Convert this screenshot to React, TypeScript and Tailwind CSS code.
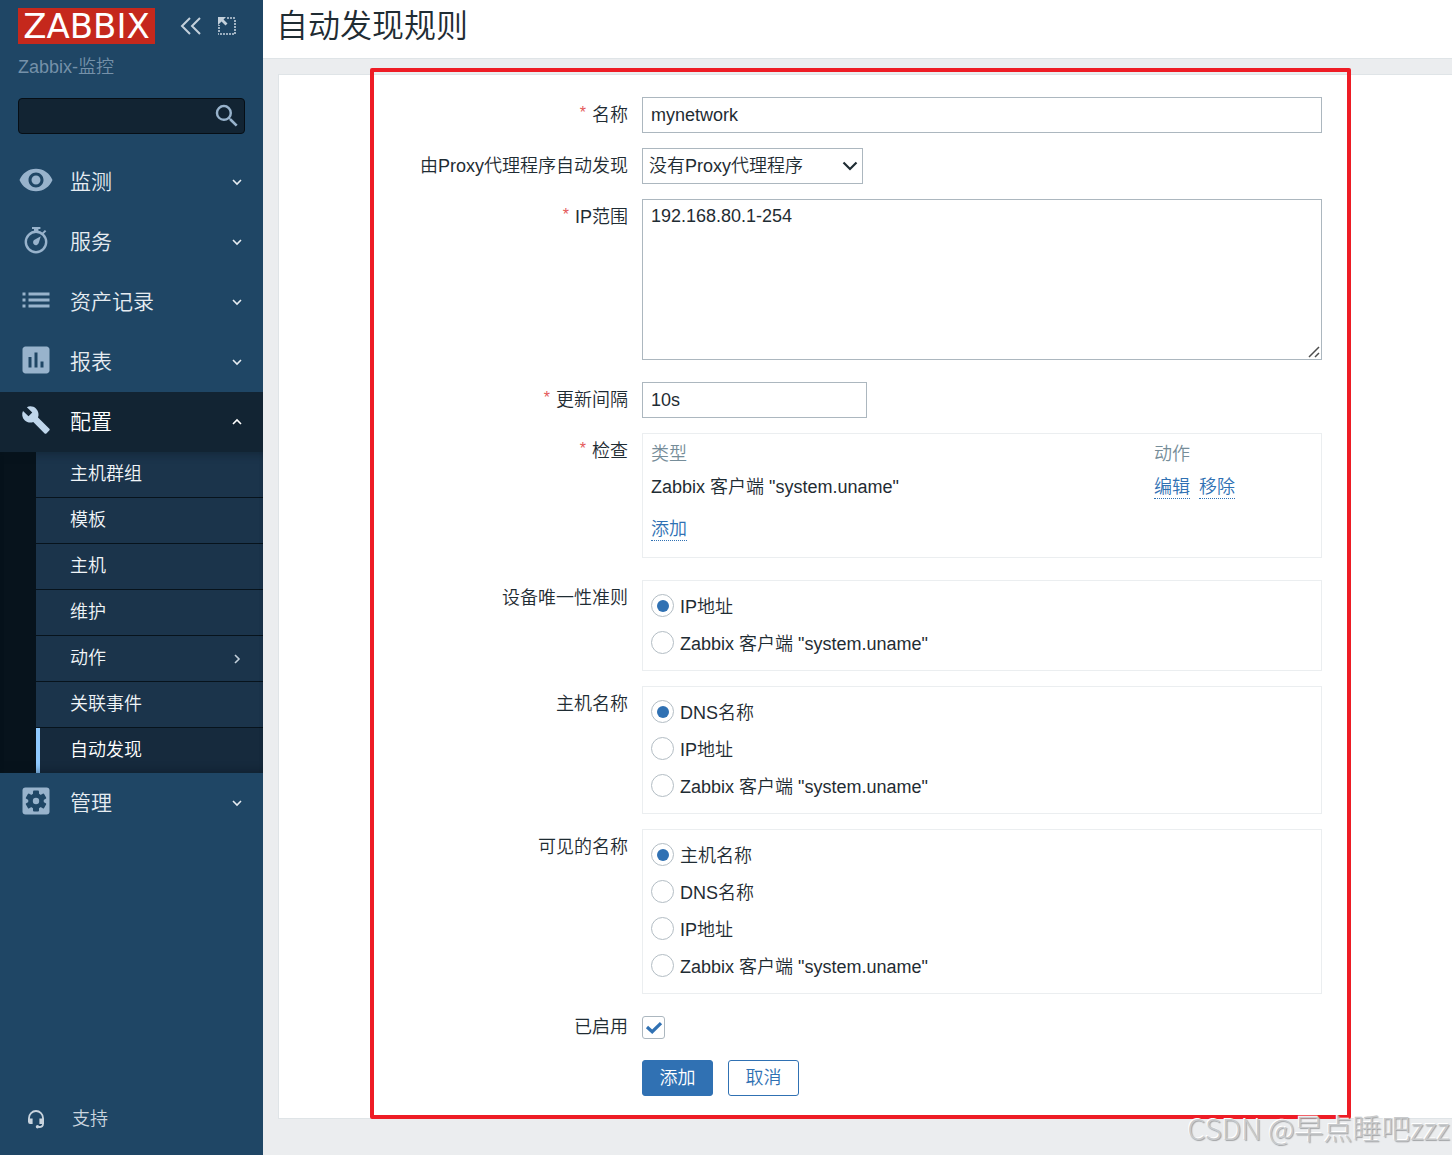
import { useState, type ReactNode } from "react";
import { MdAssessment, MdList, MdSearch, MdVisibility } from "react-icons/md";

const AGENT_KEY = 'Zabbix 客户端 "system.uname"';

const configItems = ["主机群组", "模板", "主机", "维护", "动作", "关联事件", "自动发现"];

function StopwatchIcon() {
  return (
    <svg width="36" height="36" viewBox="0 0 36 36" fill="none">
      <circle cx="18" cy="20" r="10.2" stroke="currentColor" strokeWidth="2.4" />
      <path d="M14 5h8.400v2h-2v2.800h-4.400V7h-2z" fill="currentColor" />
      <path d="M24.600 11.600l3-3" stroke="currentColor" strokeWidth="2" />
      <path d="M22.800 14.200l-2 6.600a2.900 2.900 0 1 1-3.800-3.300z" fill="currentColor" />
    </svg>
  );
}

function WrenchIcon() {
  return (
    <svg width="30" height="30" viewBox="0 0 24 24" fill="currentColor">
      <path d="M22.700 19l-9.100-9.100c.9-2.300.4-5-1.500-6.900-2-2-5-2.400-7.400-1.300L9 6 6 9 1.600 4.700C.4 7.100.9 10.100 2.900 12.100c1.900 1.900 4.600 2.400 6.900 1.500l9.100 9.100c.4.4 1 .4 1.400 0l2.300-2.300c.5-.4.5-1.100.1-1.400z" />
    </svg>
  );
}

function GearIcon() {
  return (
    <svg width="36" height="36" viewBox="0 0 36 36">
      <rect x="4.500" y="4.500" width="27" height="27" rx="3" fill="currentColor" />
      <g fill="#1f4665">
        <circle cx="18" cy="18" r="7.800" />
        <rect x="15" y="7.500" width="6" height="21" rx="1" />
        <rect x="15" y="7.500" width="6" height="21" rx="1" transform="rotate(60 18 18)" />
        <rect x="15" y="7.500" width="6" height="21" rx="1" transform="rotate(120 18 18)" />
      </g>
      <circle cx="18" cy="18" r="3.200" fill="currentColor" />
    </svg>
  );
}

function HeadsetIcon() {
  return (
    <svg width="18" height="20" viewBox="0 0 18 20" fill="none">
      <path d="M2 13V9a7 7 0 0 1 14 0v6c0 2-1.500 3-4 3" stroke="currentColor" strokeWidth="1.8" />
      <path d="M1.100 9.500H5.600V15H3.100a2 2 0 0 1-2-2zM12.400 9.500h4.500V15h-4.500z" fill="currentColor" />
      <circle cx="10.500" cy="17.700" r="1.700" fill="currentColor" />
    </svg>
  );
}

function Chevron({ className = "" }: { className?: string }) {
  return (
    <svg width="10" height="10" viewBox="0 0 10 10" fill="none" className={className}>
      <path d="M1 3l4 4 4-4" stroke="currentColor" strokeWidth="1.6" />
    </svg>
  );
}

function MenuItem({ icon, label, open = false }: { icon: ReactNode; label: string; open?: boolean }) {
  return (
    <a
      href="#"
      className={
        open
          ? "flex h-[60px] items-center bg-[#122433] pr-[21px] pl-[18px] text-white"
          : "flex h-[60px] items-center pr-[21px] pl-[18px] text-[#e6ecf1]"
      }
    >
      <span
        className={
          open
            ? "flex w-9 justify-center pb-1 text-[#bfd6eb]"
            : "flex w-9 justify-center pb-1 text-[#98b3cc]"
        }
      >
        {icon}
      </span>
      <span className="ml-4 flex-1 text-[21px]">{label}</span>
      <Chevron className={open ? "rotate-180" : ""} />
    </a>
  );
}

function Sidebar() {
  return (
    <aside className="flex w-[263px] shrink-0 flex-col bg-[#1f4665]">
      <div className="flex items-center pt-2 pl-[18px]">
        <a
          href="#"
          className="flex h-9 w-[137px] items-center justify-center bg-[#c5281c] font-['DejaVu_Sans',sans-serif] text-[34px] font-normal text-white"
        >
          ZABBIX
        </a>
        <button type="button" aria-label="收起" className="ml-6 text-[#c3d0db]">
          <svg width="24" height="20" viewBox="0 0 24 20" fill="none">
            <path d="M11 2L3 10l8 8M21 2l-8 8 8 8" stroke="currentColor" strokeWidth="2" />
          </svg>
        </button>
        <button type="button" aria-label="隐藏" className="ml-3.5 text-[#c3d0db]">
          <svg width="20" height="20" viewBox="0 0 20 20" fill="none">
            <path
              d="M10 2h9M18 4v15M17 18H1M2 16V9"
              stroke="currentColor"
              strokeWidth="1.600"
              strokeDasharray="2 1"
            />
            <path d="M1 1h8L6.500 3.500l4 4-2 2-4-4L1 9z" fill="currentColor" />
          </svg>
        </button>
      </div>
      <div className="mt-2 pl-[18px] text-[18px] leading-[30px] text-[#7591a9]">Zabbix-监控</div>

      <form className="relative mx-[18px] mt-4" onSubmit={(e) => e.preventDefault()}>
        <input
          type="text"
          aria-label="搜索"
          className="block h-9 w-full rounded border border-[#060e15] bg-[#122433] pr-10 pl-2 text-[18px] text-white outline-none"
        />
        <button type="submit" aria-label="搜索" className="absolute top-[3px] right-[3px] text-[#98b3cc]">
          <MdSearch size={30} />
        </button>
      </form>

      <nav className="mt-[18px]">
        <MenuItem icon={<MdVisibility size={36} />} label="监测" />
        <MenuItem icon={<StopwatchIcon />} label="服务" />
        <MenuItem icon={<MdList size={36} />} label="资产记录" />
        <MenuItem icon={<MdAssessment size={36} />} label="报表" />
        <MenuItem icon={<WrenchIcon />} label="配置" open />
        <div className="relative">
          <div className="divide-y divide-[#07131c] bg-[#07131c] pl-9">
            {configItems.map((item) => (
              <a
                key={item}
                href="#"
                className={
                  item === "自动发现"
                    ? "flex h-[45px] items-center border-l-4 border-l-[#8fcaff] bg-[#162a3d] pr-[21px] pl-[30px] text-[18px] text-white"
                    : "flex h-[46px] items-center bg-[#1b344b] pr-[21px] pl-[34px] text-[18px] text-[#f1f5f8]"
                }
              >
                <span className="flex-1">{item}</span>
                {item === "动作" && <Chevron className="-rotate-90 text-[#c3d0db]" />}
              </a>
            ))}
          </div>
          <div className="pointer-events-none absolute inset-0 shadow-[inset_0_8px_8px_-6px_rgba(7,19,28,0.4),inset_0_-8px_8px_-6px_rgba(7,19,28,0.4)]" />
        </div>
        <MenuItem icon={<GearIcon />} label="管理" />
      </nav>

      <a href="#" className="mt-auto mb-4 flex h-10 items-center pl-[27px] text-[18px] text-[#c9d4de]">
        <HeadsetIcon />
        <span className="ml-[27px]">支持</span>
      </a>
    </aside>
  );
}

function Row({
  label,
  htmlFor,
  id,
  required = false,
  children,
}: {
  label?: string;
  htmlFor?: string;
  id?: string;
  required?: boolean;
  children: ReactNode;
}) {
  return (
    <div className="grid grid-cols-[349px_minmax(0,680px)] gap-x-[14px]">
      <div className="text-right leading-9">
        {required && <span className="mr-1.5 align-text-top text-[16px] leading-none text-[#e45959]">*</span>}
        {label && (
          <label id={id} htmlFor={htmlFor}>
            {label}
          </label>
        )}
      </div>
      <div>{children}</div>
    </div>
  );
}

function RadioBox({ name, label, options }: { name: string; label: string; options: string[] }) {
  const [value, setValue] = useState(options[0]);

  return (
    <Row label={label} id={`${name}-label`}>
      <div
        role="radiogroup"
        aria-labelledby={`${name}-label`}
        className="flex flex-col items-start gap-[14px] border border-[#ebeef0] px-2 pt-[13px] pb-4"
      >
        {options.map((option) => (
          <label key={option} className="flex h-[23px] items-start gap-1.5">
            <input
              type="radio"
              name={name}
              checked={value === option}
              onChange={() => setValue(option)}
              className="grid size-[23px] appearance-none place-content-center rounded-full border border-[#b3bdc4] bg-white checked:before:size-3 checked:before:rounded-full checked:before:bg-[#3071b3] checked:before:content-['']"
            />
            <span className="leading-[26px]">{option}</span>
          </label>
        ))}
      </div>
    </Row>
  );
}

const linkClass = "inline-block border-b border-dotted border-[#3071b3] leading-[22px] text-[#3071b3]";

function DiscoveryForm() {
  return (
    <form className="flex flex-col gap-[15px] text-[18px]" onSubmit={(e) => e.preventDefault()}>
      <Row label="名称" htmlFor="name" required>
        <input
          id="name"
          type="text"
          defaultValue="mynetwork"
          className="block h-9 w-full border border-[#acb7bf] bg-white px-2 outline-none"
        />
      </Row>

      <Row label="由Proxy代理程序自动发现" htmlFor="proxy">
        <div className="relative w-[221px]">
          <select
            id="proxy"
            className="block h-9 w-full appearance-none border border-[#acb7bf] bg-white pr-8 pl-1.5 outline-none"
          >
            <option>没有Proxy代理程序</option>
          </select>
          <svg
            width="16"
            height="10"
            viewBox="0 0 16 10"
            fill="none"
            className="pointer-events-none absolute top-[13px] right-[5px]"
          >
            <path d="M1.500 1.500L8 8l6.500-6.500" stroke="#1f2c33" strokeWidth="2.200" />
          </svg>
        </div>
      </Row>

      <Row label="IP范围" htmlFor="iprange" required>
        <div className="relative mb-[7px]">
          <textarea
            id="iprange"
            defaultValue="192.168.80.1-254"
            className="block h-[161px] w-full resize-none border border-[#acb7bf] bg-white px-2 py-1 leading-6 outline-none"
          />
          <svg width="12" height="12" viewBox="0 0 12 12" className="absolute right-0.5 bottom-0.5">
            <path d="M1 11L11 1M7 11l4-4" stroke="#4d4d4d" strokeWidth="1.500" />
          </svg>
        </div>
      </Row>

      <Row label="更新间隔" htmlFor="delay" required>
        <input
          id="delay"
          type="text"
          defaultValue="10s"
          className="block h-9 w-[225px] border border-[#acb7bf] bg-white px-2 outline-none"
        />
      </Row>

      <Row label="检查" id="checks-label" required>
        <div className="mb-[7px] border border-[#ebeef0] px-2 pt-1 pb-0.5">
          <table aria-labelledby="checks-label" className="w-full table-fixed text-left">
            <thead>
              <tr className="h-[33px] text-[#768d99]">
                <th className="font-[350]">类型</th>
                <th className="w-[159px] font-[350]">动作</th>
              </tr>
            </thead>
            <tbody>
              <tr className="h-[33px]">
                <td>{AGENT_KEY}</td>
                <td>
                  <div className="flex gap-[9px]">
                    <a href="#" className={linkClass}>
                      编辑
                    </a>
                    <a href="#" className={linkClass}>
                      移除
                    </a>
                  </div>
                </td>
              </tr>
              <tr className="h-[51px]">
                <td colSpan={2}>
                  <a href="#" className={linkClass}>
                    添加
                  </a>
                </td>
              </tr>
            </tbody>
          </table>
        </div>
      </Row>

      <RadioBox name="uniqueness" label="设备唯一性准则" options={["IP地址", AGENT_KEY]} />
      <RadioBox name="host-source" label="主机名称" options={["DNS名称", "IP地址", AGENT_KEY]} />
      <RadioBox
        name="name-source"
        label="可见的名称"
        options={["主机名称", "DNS名称", "IP地址", AGENT_KEY]}
      />

      <Row label="已启用" htmlFor="status">
        <div className="flex h-9 items-center">
          <div className="relative size-[23px]">
            <input
              id="status"
              type="checkbox"
              defaultChecked
              className="peer block size-[23px] appearance-none rounded-[3px] border border-[#acb7bf] bg-white"
            />
            <svg
              width="23"
              height="23"
              viewBox="0 0 23 23"
              fill="none"
              className="pointer-events-none absolute inset-0 hidden peer-checked:block"
            >
              <path d="M5 11l5.200 4.700L19 7.200" stroke="#3071b3" strokeWidth="3.200" />
            </svg>
          </div>
        </div>
      </Row>

      <Row>
        <div className="flex gap-[15px]">
          <button
            type="submit"
            className="h-9 w-[71px] rounded-[3px] border border-[#3071b3] bg-[#3071b3] text-white"
          >
            添加
          </button>
          <button
            type="button"
            className="h-9 w-[71px] rounded-[3px] border border-[#3071b3] bg-white text-[#3071b3]"
          >
            取消
          </button>
        </div>
      </Row>
    </form>
  );
}

export default function App() {
  return (
    <div className="relative flex min-h-screen bg-[#ebedef] font-['Liberation_Sans','Noto_Sans_CJK_SC',sans-serif] font-[350] text-[#1f2c33]">
      <Sidebar />
      <main className="min-w-0 flex-1">
        <header className="h-[59px] border-b border-[#dfe4e7] bg-white pl-[13px]">
          <h1 className="text-[32px] leading-[52px]">自动发现规则</h1>
        </header>
        <div className="relative mt-[15px] mb-9 ml-[15px] border-y border-l border-[#dfe4e7] bg-white py-[22px]">
          <DiscoveryForm />
          <div className="pointer-events-none absolute -top-[7px] right-[101px] -bottom-px left-[91px] rounded-[2px] border-4 border-[#ee1c25]" />
        </div>
      </main>
      <div className="pointer-events-none absolute right-0.5 bottom-2 font-['Noto_Sans_CJK_SC',sans-serif] text-[29px] leading-10 font-light text-[#c8cacc] [text-shadow:1px_1px_1px_#a0a2a4,-1px_-1px_0_#ffffff]">
        CSDN @早点睡吧zzz
      </div>
    </div>
  );
}
